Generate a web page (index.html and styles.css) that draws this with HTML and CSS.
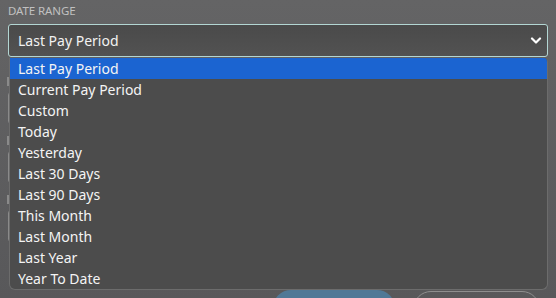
FILE: index.html
```html
<!DOCTYPE html>
<html>
<head>
<meta charset="utf-8">
<link rel="stylesheet" href="styles.css">
</head>
<body>
<div class="page">
  <div class="field">
    <div class="label">DATE RANGE</div>
    <div class="select-wrap">
      <div class="select">
        <span>Last Pay Period</span>
        <svg class="chev" width="12" height="8" viewBox="0 0 12 8"><path d="M2 1.5 L6 5.5 L10 1.5" fill="none" stroke="#fff" stroke-width="2.2" stroke-linecap="round" stroke-linejoin="round"/></svg>
      </div>
      <ul class="menu">
        <li class="active">Last Pay Period</li>
        <li>Current Pay Period</li>
        <li>Custom</li>
        <li>Today</li>
        <li>Yesterday</li>
        <li>Last 30 Days</li>
        <li>Last 90 Days</li>
        <li>This Month</li>
        <li>Last Month</li>
        <li>Last Year</li>
        <li>Year To Date</li>
      </ul>
    </div>
  </div>
  <div class="hidden-fields">
    <div class="mark"></div>
    <div class="input"></div>
    <div class="mark"></div>
    <div class="input"></div>
    <div class="mark"></div>
    <div class="input"></div>
  </div>
  <div class="actions">
    <div class="btn primary"></div>
    <div class="btn outline"></div>
  </div>
</div>
</body>
</html>
```

FILE: styles.css
```css
html, body {
  margin: 0;
  padding: 0;
}
body {
  width: 556px;
  height: 298px;
  overflow: hidden;
  background: linear-gradient(#646465, #58585a);
  font-family: "Noto Sans", "Open Sans", sans-serif;
  color: #f2f2f2;
}
.page {
  position: relative;
  height: 298px;
  overflow: hidden;
  box-sizing: border-box;
  padding: 3px 8px 0 8px;
  display: flex;
  flex-direction: column;
}
.label {
  font-size: 11.5px;
  color: #c0c0c0;
  line-height: 16px;
  letter-spacing: -0.1px;
}
.select-wrap {
  position: relative;
  margin-top: 5px;
}
.select {
  height: 31px;
  border: 1px solid #b3d6d3;
  border-radius: 3px;
  background: linear-gradient(#4a4a4a, #525252);
  display: flex;
  align-items: center;
  justify-content: space-between;
  padding: 0 5px 0 9px;
  font-size: 14px;
}
.chev {
  display: block;
  margin-top: 1px;
}
.menu {
  position: absolute;
  top: 34px;
  left: 1px;
  width: 537px;
  margin: 0;
  padding: 0;
  list-style: none;
  background: #4c4c4c;
  border: 1px solid #6c6c6c;
  border-top: none;
  border-radius: 0 4px 6px 6px;
  overflow: hidden;
  z-index: 2;
}
.menu li {
  height: 21px;
  line-height: 21px;
  padding-left: 8px;
  font-size: 14px;
  color: #f4f4f4;
  white-space: nowrap;
}
.menu li.active {
  background: #1b64d1;
}
.hidden-fields {
  display: flex;
  flex-direction: column;
  gap: 6px;
  padding-top: 20px;
}
.mark {
  width: 30px;
  height: 9px;
  margin-left: -1px;
  background: #8a8a8a;
}
.input {
  height: 30px;
  border: 1px solid #8a8a8a;
  border-radius: 3px;
  background: #4e4e4e;
  margin-bottom: 6px;
}
.actions {
  display: flex;
  gap: 18px;
  position: absolute;
  top: 290px;
  right: 16px;
}
.btn {
  width: 122px;
  height: 36px;
  border-radius: 18px;
}
.btn.primary {
  background: #507896;
}
.btn.outline {
  width: 127px;
  box-sizing: border-box;
  border: 1px solid #8e8e8e;
  margin-top: 1px;
}
```
